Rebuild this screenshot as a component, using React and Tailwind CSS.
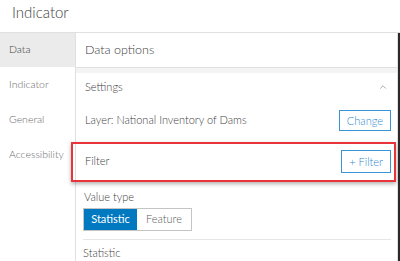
import { ChevronUp } from "lucide-react";

const navItems = ["Data", "Indicator", "General", "Accessibility"];

function Sidebar() {
  return (
    <div className="w-[76px] shrink-0 border-r border-[#e0e0e0]">
      {navItems.map((item, i) => (
        <div
          key={item}
          className={
            i === 0
              ? "h-[34px] flex items-center pl-[9px] text-[10.5px] text-[#3c3c3c] bg-[#ebebeb]"
              : "h-[35px] flex items-center pl-[9px] text-[10.5px] text-[#6a6a6a]"
          }
        >
          {item}
        </div>
      ))}
    </div>
  );
}

function OutlineButton({ children, className }) {
  return (
    <button
      className={
        "px-[7px] border border-[#3a94d4] text-[#2f8bd0] text-[11px] leading-none bg-white " +
        className
      }
    >
      {children}
    </button>
  );
}

export default function App() {
  return (
    <div
      className="w-[400px] h-[261px] bg-white overflow-hidden flex flex-col text-[#404040] font-light"
      style={{ fontFamily: "Lato, 'Open Sans', sans-serif" }}
    >
      {/* title */}
      <div className="h-[32px] pt-[3px] pl-[12px] text-[15px] leading-[18px] text-[#404040] shrink-0">
        Indicator
      </div>

      <div className="flex flex-1 border-t border-[#e0e0e0] min-h-0">
        <Sidebar />

        <div className="flex-1 flex flex-col border-r border-[#e0e0e0]">
          <div className="h-[35px] shrink-0 flex items-center pl-[9px] text-[12.5px] border-b border-[#e0e0e0]">
            Data options
          </div>
          <div className="h-[5px] bg-[#f4f4f4] shrink-0"></div>

          {/* settings */}
          <div className="h-[28px] shrink-0 flex items-center justify-between pl-[9px] pr-[9px] text-[11px]">
            <span>Settings</span>
            <ChevronUp size={10} strokeWidth={1.5} className="text-[#777]" />
          </div>

          <div className="h-[38px] shrink-0 flex items-center justify-between pl-[9px] pr-[6px] text-[11px]">
            <span>Layer: National Inventory of Dams</span>
            <OutlineButton className="h-[21px]">Change</OutlineButton>
          </div>

          {/* filter row, with the red callout drawn over it */}
          <div className="relative h-[44px] shrink-0 flex items-center justify-between pl-[9px] pr-[6px] text-[11px]">
            <span>Filter</span>
            <OutlineButton className="h-[23px]">+ Filter</OutlineButton>
            <div className="absolute left-[-5px] right-[1px] top-[3px] bottom-[1px] border-2 border-[#e8343a] shadow-[0_2px_4px_rgba(0,0,0,0.3)] pointer-events-none"></div>
          </div>

          <div className="pl-[7px] pr-[6px] pt-[8px]">
            <div className="text-[11px] leading-[12px] mb-[5px] pl-[1px]">Value type</div>
            <div className="flex w-[109px] h-[23px] border border-[#c4c4c4] text-[11px]">
              <div className="w-[53px] bg-[#0079c1] text-white font-normal flex items-center justify-center">
                Statistic
              </div>
              <div className="flex-1 flex items-center justify-center text-[#5a5a5a]">
                Feature
              </div>
            </div>
            <div className="h-px bg-[#e6e6e6] mt-[8px]"></div>
            <div className="text-[11px] leading-[12px] mt-[7px]">Statistic</div>
          </div>
        </div>
        <div className="w-[2px] bg-[#2a2a2a] shrink-0"></div>
      </div>
    </div>
  );
}
